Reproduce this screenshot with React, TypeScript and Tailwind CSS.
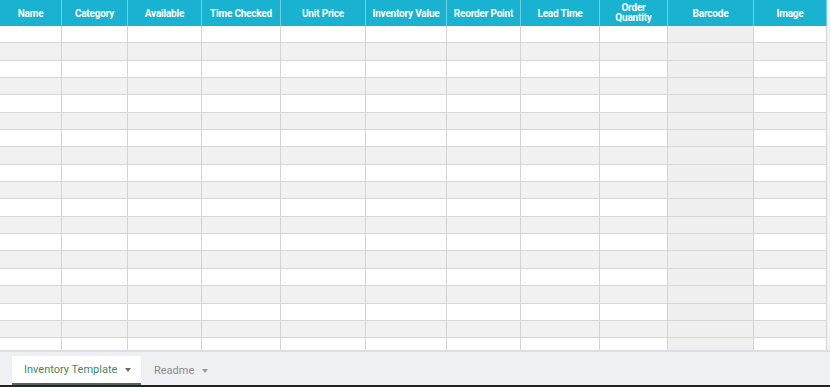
import React from "react";

const cols = [
  { label: "Name", w: 62 },
  { label: "Category", w: 66 },
  { label: "Available", w: 74 },
  { label: "Time Checked", w: 79 },
  { label: "Unit Price", w: 85 },
  { label: "Inventory Value", w: 81 },
  { label: "Reorder Point", w: 74 },
  { label: "Lead Time", w: 79 },
  { label: "Order Quantity", w: 68, two: true },
  { label: "Barcode", w: 86 },
  { label: "Image", w: 73 },
];

function Caret({ color }: { color: string }) {
  return (
    <svg width="6" height="4" viewBox="0 0 6 4" className="ml-[8px]">
      <path d="M0 0 L6 0 L3 4 Z" fill={color} />
    </svg>
  );
}

export default function App() {
  const rows = Array.from({ length: 19 });
  return (
    <div
      className="w-[830px] h-[387px] bg-[#eef0f3] overflow-hidden flex flex-col"
      style={{ fontFamily: "Roboto, 'Open Sans', sans-serif" }}
    >
      <div className="flex h-[350px] bg-[#f3f3f3]">
        <div className="w-[827px] flex flex-col bg-white">
          <div className="flex h-[26px] bg-[#19b2d0]">
            {cols.map((c, i) => (
              <div
                key={i}
                style={{ width: c.w }}
                className="shrink-0 flex items-center justify-center pt-[2px] border-r border-[#6ccde0] text-white font-bold text-[10px] tracking-[-0.2px] text-center leading-[10px]"
              >
                {c.two ? (
                  <span className="block leading-[10px] -mt-[2px]">
                    Order
                    <br />
                    Quantity
                  </span>
                ) : (
                  c.label
                )}
              </div>
            ))}
          </div>
          <div className="flex-1 overflow-hidden">
            {rows.map((_, r) => (
              <div
                key={r}
                className={`flex h-[17.35px] border-b border-[#d6d6d6] ${
                  r % 2 === 0 ? "bg-white" : "bg-[#f1f1f1]"
                }`}
              >
                {cols.map((c, i) => (
                  <div
                    key={i}
                    style={{ width: c.w }}
                    className={`shrink-0 border-r border-[#d3d3d3] ${
                      i === 9 ? "bg-[#efefef]" : ""
                    }`}
                  />
                ))}
              </div>
            ))}
          </div>
        </div>
      </div>
      <div className="h-[2px] bg-[#dcdee1]" />
      <div className="flex-1 flex items-start pl-[12px] pt-[4px]">
        <div className="h-[29px] w-[129px] bg-white border-b-2 border-[#5b6068] flex items-center pl-[12px] pt-[2px] text-[11px] text-[#3f8a5c]">
          Inventory Template
          <Caret color="#666" />
        </div>
        <div className="h-[29px] flex items-center pl-[13px] pt-[2px] text-[11px] text-[#8a8a8a]">
          Readme
          <Caret color="#999" />
        </div>
      </div>
      <div className="h-[3px] bg-[#1c2b22]" />
    </div>
  );
}
